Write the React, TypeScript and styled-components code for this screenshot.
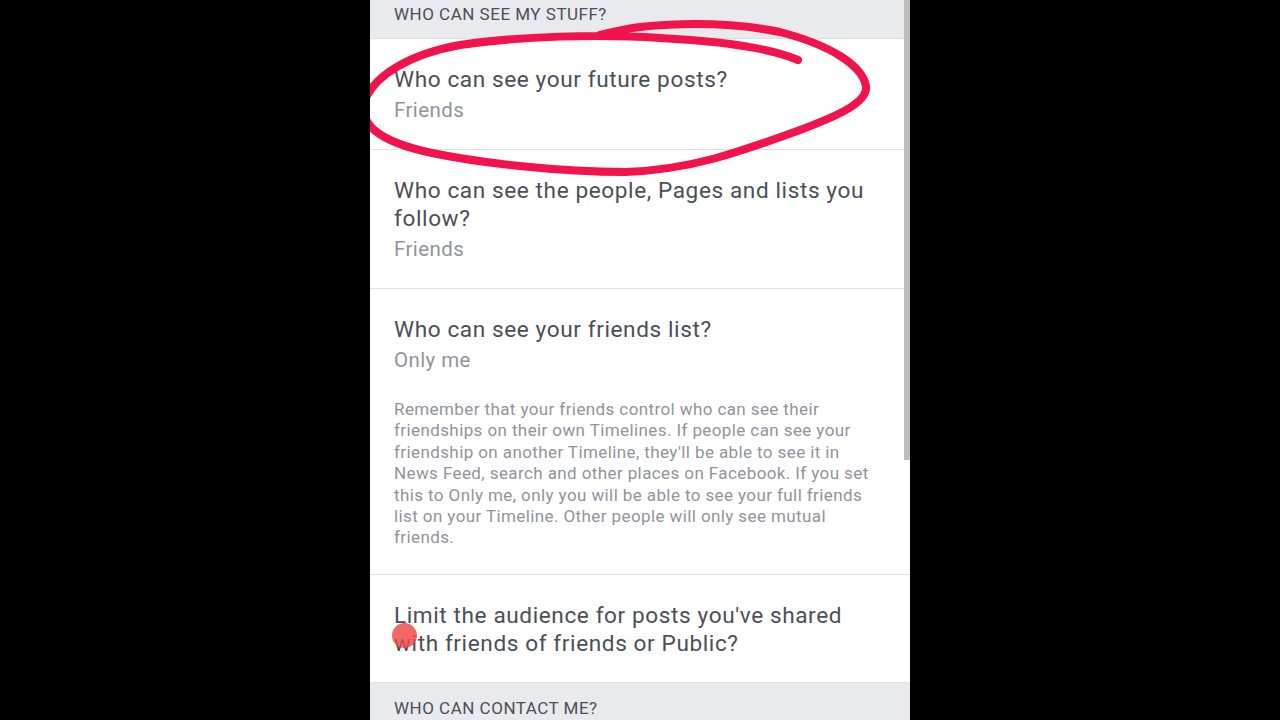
import React from "react";
import styled, { createGlobalStyle } from "styled-components";

const Global = createGlobalStyle`
  html, body { margin: 0; padding: 0; background: #000; }
  body { font-family: Roboto, "Noto Sans", "Liberation Sans", sans-serif; }
`;

const Stage = styled.div`
  width: 1280px;
  height: 720px;
  display: flex;
  justify-content: center;
  background: #000;
  overflow: hidden;
`;

const Screen = styled.div`
  position: relative;
  width: 540px;
  height: 720px;
  background: #fff;
  overflow: hidden;
`;

const SectionHeader = styled.div<{ $top: number; $bottom: number }>`
  background: #e9eaee;
  color: #4b4f56;
  font-size: 17px;
  line-height: 20px;
  letter-spacing: 0.5px;
  padding: ${(p) => p.$top}px 24px ${(p) => p.$bottom}px;
  border-bottom: 1px solid #dddfe2;
`;

const Row = styled.div`
  padding: 27px 24px 24px;
  border-bottom: 1px solid #dddfe2;
`;

const Title = styled.div`
  color: #4b4f56;
  font-size: 22.6px;
  line-height: 28px;
  letter-spacing: 0.6px;
`;

const Sub = styled.div`
  color: #90949c;
  font-size: 20.5px;
  line-height: 30px;
  letter-spacing: 0.4px;
  margin-top: 1px;
`;

const Note = styled.div`
  color: #90949c;
  font-size: 17px;
  line-height: 21.4px;
  letter-spacing: 0.4px;
  margin-top: 24px;
  margin-bottom: 1px;
  padding-right: 10px;
`;

const Scrollbar = styled.div`
  position: absolute;
  top: 0;
  right: 0;
  width: 6px;
  height: 460px;
  background: #bdbdbd;
`;

const Annotation = styled.svg`
  position: absolute;
  left: 0;
  top: 0;
  pointer-events: none;
`;

const Touch = styled.div`
  position: absolute;
  left: 22px;
  top: 623px;
  width: 25px;
  height: 25px;
  border-radius: 50%;
  background: rgba(240, 70, 70, 0.82);
`;

export default function App() {
  return (
    <>
      <Global />
      <Stage>
        <Screen>
          <SectionHeader $top={4} $bottom={14}>WHO CAN SEE MY STUFF?</SectionHeader>
          <Row>
            <Title>Who can see your future posts?</Title>
            <Sub>Friends</Sub>
          </Row>
          <Row>
            <Title>Who can see the people, Pages and lists you follow?</Title>
            <Sub>Friends</Sub>
          </Row>
          <Row>
            <Title>Who can see your friends list?</Title>
            <Sub>Only me</Sub>
            <Note>
              Remember that your friends control who can see their friendships on their own
              Timelines. If people can see your friendship on another Timeline, they'll be able
              to see it in News Feed, search and other places on Facebook. If you set this to
              Only me, only you will be able to see your full friends list on your Timeline.
              Other people will only see mutual friends.
            </Note>
          </Row>
          <Row>
            <Title>Limit the audience for posts you've shared with friends of friends or Public?</Title>
          </Row>
          <SectionHeader $top={15} $bottom={20}>WHO CAN CONTACT ME?</SectionHeader>
          <Scrollbar />
          <Annotation width="540" height="720" viewBox="370 0 540 720">
            <path
              d="M798 60 C 770 48, 720 41, 660 38 C 600 34, 520 36, 460 45 C 410 54, 375 75, 365 100 C 358 125, 380 142, 432 153 C 480 163, 560 172, 625 172 C 690 170, 740 152, 800 130 C 840 115, 868 102, 866 86 C 862 65, 830 45, 780 32 C 740 24, 690 22, 640 27 C 625 29, 612 32, 600 35"
              fill="none"
              stroke="#f2124c"
              strokeWidth="8"
              strokeLinecap="round"
              strokeLinejoin="round"
            />
          </Annotation>
          <Touch />
        </Screen>
      </Stage>
    </>
  );
}
